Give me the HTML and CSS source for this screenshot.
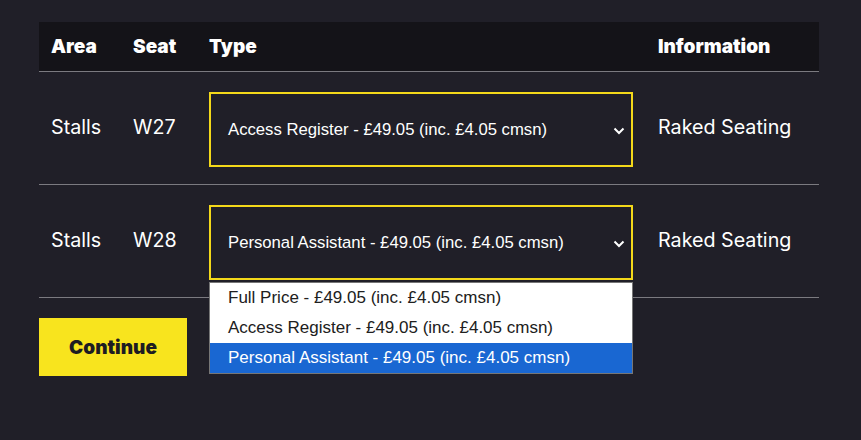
FILE: index.html
```html
<!DOCTYPE html>
<html lang="en">
<head>
<meta charset="utf-8">
<title>Seats</title>
<link rel="stylesheet" href="styles.css">
</head>
<body>
<div class="page">
  <div class="table">
    <div class="row head">
      <div class="cell">Area</div>
      <div class="cell">Seat</div>
      <div class="cell">Type</div>
      <div class="cell">Information</div>
    </div>
    <div class="row">
      <div class="cell text">Stalls</div>
      <div class="cell text">W27</div>
      <div class="cell">
        <div class="select">
          <span>Access Register - £49.05 (inc. £4.05 cmsn)</span>
          <svg class="chev" width="12" height="8" viewBox="0 0 12 8"><path d="M1.5 1.5 L6 6 L10.5 1.5" fill="none" stroke="#fff" stroke-width="2"/></svg>
        </div>
      </div>
      <div class="cell text">Raked Seating</div>
    </div>
    <div class="row">
      <div class="cell text">Stalls</div>
      <div class="cell text">W28</div>
      <div class="cell typecell">
        <div class="select">
          <span>Personal Assistant - £49.05 (inc. £4.05 cmsn)</span>
          <svg class="chev" width="12" height="8" viewBox="0 0 12 8"><path d="M1.5 1.5 L6 6 L10.5 1.5" fill="none" stroke="#fff" stroke-width="2"/></svg>
        </div>
        <ul class="dropdown">
          <li>Full Price - £49.05 (inc. £4.05 cmsn)</li>
          <li>Access Register - £49.05 (inc. £4.05 cmsn)</li>
          <li class="active">Personal Assistant - £49.05 (inc. £4.05 cmsn)</li>
        </ul>
      </div>
      <div class="cell text">Raked Seating</div>
    </div>
  </div>
  <button class="continue">Continue</button>
</div>
</body>
</html>
```
FILE: styles.css
```css
html, body {
  margin: 0;
  padding: 0;
  background: #201f28;
  height: 100%;
}
body {
  font-family: "Inter", "Liberation Sans", sans-serif;
  color: #ffffff;
}
.page {
  padding: 22px 42px 0 39px;
}
.table {
  width: 780px;
}
.row {
  display: grid;
  grid-template-columns: 82px 76px 449px 173px;
  align-items: center;
  border-bottom: 1px solid #7b7a80;
  padding: 20px 0 17px;
  font-size: 19.7px;
}
.row.head {
  background: #141318;
  height: 50px;
  padding: 0;
  box-sizing: border-box;
  font-weight: 900;
  font-size: 19px;
  align-items: center;
}
.cell {
  padding-left: 12px;
}
.cell.text {
  line-height: 1;
  padding-bottom: 3px;
}
.typecell {
  position: relative;
}
.select {
  height: 75px;
  box-sizing: border-box;
  border: 2px solid #f3d81a;
  display: flex;
  align-items: center;
  justify-content: space-between;
  padding: 0 6px 0 17px;
  font-family: "Liberation Sans", Arial, sans-serif;
  font-size: 16.7px;
  width: 424px;
}
.chev {
  display: block;
  margin-top: 2px;
}
.dropdown {
  position: absolute;
  left: 12px;
  top: 77px;
  width: 424px;
  box-sizing: border-box;
  margin: 0;
  padding: 0;
  list-style: none;
  background: #ffffff;
  border: 1px solid #767676;
  font-family: "Liberation Sans", Arial, sans-serif;
  font-size: 17px;
  color: #202020;
  z-index: 5;
}
.dropdown li {
  height: 30px;
  line-height: 30px;
  padding-left: 18px;
}
.dropdown li.active {
  background: #1967d2;
  color: #ffffff;
}
.continue {
  display: block;
  margin-top: 20px;
  width: 148px;
  height: 58px;
  border: none;
  background: #f8e41e;
  color: #1d1c22;
  font-family: "Inter", "Liberation Sans", sans-serif;
  font-weight: 900;
  font-size: 19px;
  padding: 0;
}
```
